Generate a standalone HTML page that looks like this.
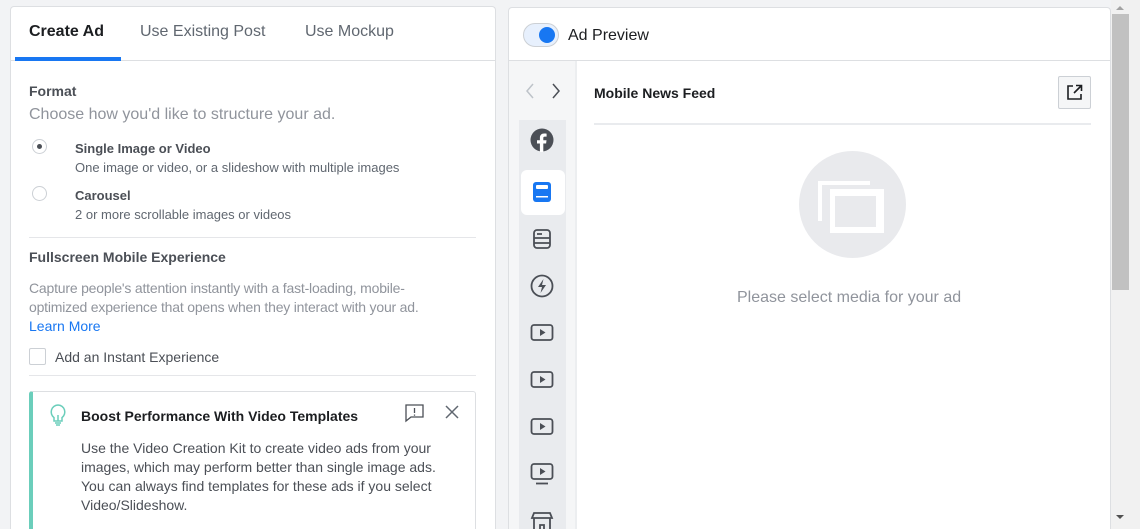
<!DOCTYPE html><html><head><style>
*{box-sizing:border-box;margin:0;padding:0}
html,body{width:1140px;height:529px;overflow:hidden}
body{background:#f2f3f5;font-family:"Liberation Sans",Arial,sans-serif;position:relative;color:#1c1e21}
.a{position:absolute}
.card{background:#fff;border:1px solid #dddfe2;border-bottom:none;border-radius:4px 4px 0 0}
.t{font-size:16px;color:#606770}
.b{font-weight:bold}
.ic{position:absolute;left:530px}
</style></head><body>
<div class="a card" style="left:10px;top:6px;width:486px;height:523px"></div>
<div class="a" style="left:11px;top:60px;width:484px;height:1px;background:#dddfe2"></div>
<div class="a" style="left:15px;top:57px;width:106px;height:4px;background:#1877f2"></div>
<div class="a b" style="left:29px;top:23px;font-size:16px;color:#1c1e21">Create Ad</div>
<div class="a t" style="left:140px;top:23px">Use Existing Post</div>
<div class="a t" style="left:305px;top:23px">Use Mockup</div>
<div class="a b" style="left:29px;top:83px;font-size:14px;color:#4b4f56">Format</div>
<div class="a" style="left:29px;top:106px;font-size:16px;color:#90949c">Choose how you'd like to structure your ad.</div>
<div class="a" style="left:32px;top:139px;width:15px;height:15px;border:1px solid #ccd0d5;border-radius:50%"><div class="a" style="left:4px;top:4px;width:5px;height:5px;border-radius:50%;background:#4b4f56"></div></div>
<div class="a b" style="left:75px;top:141px;font-size:13px;color:#4b4f56">Single Image or Video</div>
<div class="a" style="left:75px;top:160px;font-size:13px;color:#606770">One image or video, or a slideshow with multiple images</div>
<div class="a" style="left:32px;top:186px;width:15px;height:15px;border:1px solid #ccd0d5;border-radius:50%"></div>
<div class="a b" style="left:75px;top:188px;font-size:13px;color:#4b4f56">Carousel</div>
<div class="a" style="left:75px;top:207px;font-size:13px;color:#606770">2 or more scrollable images or videos</div>
<div class="a" style="left:29px;top:237px;width:447px;height:1px;background:#e5e6e9"></div>
<div class="a b" style="left:29px;top:249px;font-size:14px;color:#4b4f56">Fullscreen Mobile Experience</div>
<div class="a" style="left:29px;top:279px;font-size:14px;line-height:19px;color:#90949c;width:430px;letter-spacing:-0.2px">Capture people's attention instantly with a fast-loading, mobile-optimized experience that opens when they interact with your ad.<br><span style="color:#1877f2;letter-spacing:0">Learn More</span></div>
<div class="a" style="left:29px;top:348px;width:17px;height:17px;border:1px solid #ccd0d5;border-radius:2px"></div>
<div class="a" style="left:55px;top:349px;font-size:14px;color:#4b4f56">Add an Instant Experience</div>
<div class="a" style="left:29px;top:375px;width:447px;height:1px;background:#e5e6e9"></div>
<div class="a" style="left:29px;top:391px;width:447px;height:150px;border:1px solid #dddfe2;border-left:4px solid #6bcebb;border-radius:3px;background:#fff"></div>
<svg class="a" style="left:49px;top:404px" width="18" height="22" viewBox="0 0 18 22" fill="none" stroke="#6bcebb" stroke-width="1.5"><path d="M9 1a7 7 0 0 0-4 12.6V17h8v-3.4A7 7 0 0 0 9 1z M6 19h6 M7 21h4 M9 17v-6"/></svg>
<div class="a b" style="left:81px;top:408px;font-size:14px;color:#1c1e21">Boost Performance With Video Templates</div>
<svg class="a" style="left:405px;top:404px" width="19" height="19" viewBox="0 0 19 19" fill="none" stroke="#4b4f56" stroke-width="1.3"><path d="M1 1h17v12H6l-5 4z"/><path d="M9.5 4v5M9.5 10.5v1.2"/></svg>
<svg class="a" style="left:445px;top:405px" width="14" height="14" viewBox="0 0 14 14" stroke="#606770" stroke-width="1.5"><path d="M1 1l12 12M13 1L1 13"/></svg>
<div class="a" style="left:81px;top:439px;font-size:14px;line-height:19px;color:#4b4f56;width:380px">Use the Video Creation Kit to create video ads from your images, which may perform better than single image ads. You can always find templates for these ads if you select Video/Slideshow.</div>

<div class="a card" style="left:508px;top:7px;width:603px;height:522px"></div>
<div class="a" style="left:509px;top:60px;width:601px;height:1px;background:#dddfe2"></div>
<div class="a" style="left:523px;top:23px;width:36px;height:24px;border:1px solid #ccd0d5;border-radius:12px;background:#e7f0fd"><div class="a" style="left:15px;top:3px;width:16px;height:16px;border-radius:50%;background:#1877f2"></div></div>
<div class="a" style="left:568px;top:27px;font-size:16px;color:#1c1e21">Ad Preview</div>
<div class="a" style="left:509px;top:61px;width:68px;height:480px;background:#f5f6f7;border-right:2px solid #eceef0"></div>
<div class="a" style="left:519px;top:120px;width:47px;height:420px;background:#e9ebee"></div>
<div class="a" style="left:521px;top:170px;width:44px;height:45px;background:#fff;border-radius:6px"></div>
<svg class="a" style="left:523px;top:82px" width="40" height="18" viewBox="0 0 40 18" fill="none" stroke-width="1.5"><path d="M10 2L4 9l6 7" stroke="#bec3c9"/><path d="M30 2l6 7-6 7" stroke="#4b4f56"/></svg>
<svg class="ic" style="top:128px" width="24" height="24" viewBox="0 0 24 24"><circle cx="12" cy="12" r="11.5" fill="#4b4f56"/><path d="M13.3 24v-8.5h2.8l.4-3.3h-3.2v-2c0-1 .3-1.6 1.6-1.6h1.7V5.6c-.3 0-1.3-.1-2.5-.1-2.5 0-4.2 1.5-4.2 4.3v2.4H7v3.3h2.9V24z" fill="#fff"/></svg>
<svg class="ic" style="top:180px" width="24" height="24" viewBox="0 0 24 24"><rect x="3" y="2" width="18" height="20" rx="3" fill="#1877f2"/><rect x="6" y="5" width="12" height="4" rx="1" fill="#fff"/><rect x="6" y="16" width="12" height="1.5" fill="#fff"/></svg>
<svg class="ic" style="top:227px" width="24" height="24" viewBox="0 0 24 24" fill="none" stroke="#4b4f56" stroke-width="1.8"><rect x="4" y="3" width="16" height="18" rx="3"/><path d="M4 11h16M4 16h16M7 7h5"/></svg>
<svg class="ic" style="top:274px" width="24" height="24" viewBox="0 0 24 24"><circle cx="12" cy="12" r="10.5" fill="none" stroke="#4b4f56" stroke-width="1.8"/><path d="M13.5 5L8 13h4l-1.5 6L16 11h-4z" fill="#4b4f56"/></svg>
<svg class="ic" style="top:321px" width="24" height="24" viewBox="0 0 24 24"><rect x="1.5" y="4" width="21" height="15" rx="2.5" fill="none" stroke="#4b4f56" stroke-width="1.8"/><path d="M10 8v7l5.5-3.5z" fill="#4b4f56"/></svg>
<svg class="ic" style="top:368px" width="24" height="24" viewBox="0 0 24 24"><rect x="1.5" y="4" width="21" height="15" rx="2.5" fill="none" stroke="#4b4f56" stroke-width="1.8"/><path d="M10 8v7l5.5-3.5z" fill="#4b4f56"/></svg>
<svg class="ic" style="top:415px" width="24" height="24" viewBox="0 0 24 24"><rect x="1.5" y="4" width="21" height="15" rx="2.5" fill="none" stroke="#4b4f56" stroke-width="1.8"/><path d="M10 8v7l5.5-3.5z" fill="#4b4f56"/></svg>
<svg class="ic" style="top:462px" width="24" height="24" viewBox="0 0 24 24"><rect x="1.5" y="2" width="21" height="15" rx="2.5" fill="none" stroke="#4b4f56" stroke-width="1.8"/><path d="M10 6v7l5.5-3.5z" fill="#4b4f56"/><path d="M6 21.5h12" stroke="#4b4f56" stroke-width="1.8"/></svg>
<svg class="ic" style="top:509px" width="24" height="24" viewBox="0 0 24 24" fill="none" stroke="#4b4f56" stroke-width="1.8"><path d="M4 4h16l2 5H2z M4 9v13h16V9 M10 22v-6h4v6"/></svg>
<div class="a b" style="left:594px;top:85px;font-size:14px;color:#1c1e21">Mobile News Feed</div>
<div class="a" style="left:1058px;top:76px;width:33px;height:33px;border:1px solid #ccd0d5;border-radius:2px;background:#f5f6f7"></div>
<svg class="a" style="left:1066px;top:84px" width="17" height="17" viewBox="0 0 17 17" fill="none" stroke="#1c1e21" stroke-width="1.6"><path d="M7 2H2v13h13v-5 M10 1.5h5.5V7 M15.5 1.5L8 9"/></svg>
<div class="a" style="left:594px;top:123px;width:497px;height:2px;background:#e9ebee"></div>
<div class="a" style="left:799px;top:151px;width:107px;height:107px;border-radius:50%;background:#e9eaed"></div>
<div class="a" style="left:818px;top:181px;width:52px;height:40px;border:4px solid #fff;border-right:none;border-bottom:none"></div>
<div class="a" style="left:830px;top:189px;width:54px;height:44px;background:#fff"><div class="a" style="left:5px;top:7px;width:41px;height:31px;background:#e9eaed"></div></div>
<div class="a" style="left:737px;top:289px;font-size:16px;color:#90949c">Please select media for your ad</div>
<div class="a" style="left:1111px;top:0;width:29px;height:529px;background:#f1f1f1"></div>
<div class="a" style="left:1112px;top:14px;width:17px;height:276px;background:#c1c1c1"></div>
<div class="a" style="left:1116px;top:2px;width:0;height:0;border:4px solid transparent;border-bottom-color:#a3a3a3"></div>
<div class="a" style="left:1116px;top:515px;width:0;height:0;border:4px solid transparent;border-top-color:#505050"></div>
</body></html>
